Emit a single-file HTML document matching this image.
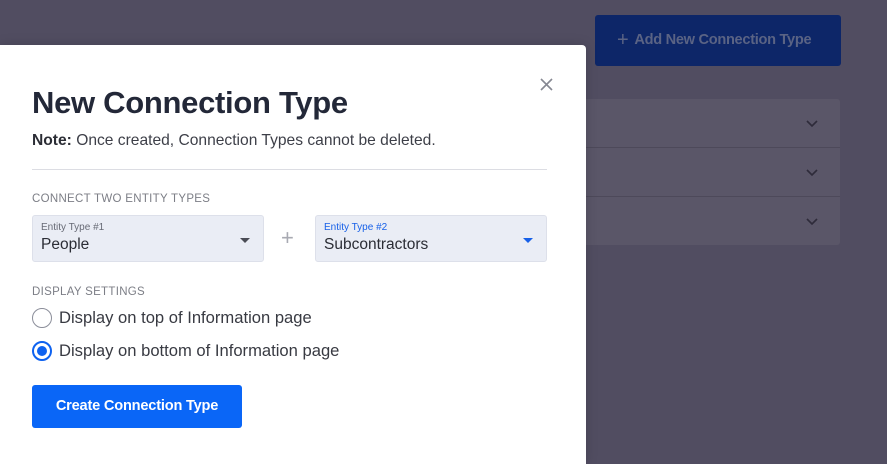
<!DOCTYPE html>
<html><head><meta charset="utf-8"><style>
*{box-sizing:border-box;margin:0;padding:0}
html,body{width:887px;height:464px;overflow:hidden}
body{position:relative;background:#514d61;font-family:"Liberation Sans",sans-serif;}
.addbtn{position:absolute;left:595px;top:15px;width:246px;height:51px;background:#0d2668;border-radius:3px;color:#5a6384;font-weight:bold;font-size:14.6px;line-height:51px;padding-left:22px;letter-spacing:-0.3px}
.addbtn span{font-weight:normal;font-size:20px;vertical-align:-2px;margin-right:6px}
.rows{position:absolute;left:540px;top:99px;width:300px;height:146px;background:#5a5668;border-radius:3px}
.row{height:49px;border-bottom:1px solid #4d495a;position:relative}
.row:last-child{border-bottom:none}
.row svg{position:absolute;right:22px;top:21px}
.modal{position:absolute;left:0;top:45px;width:586px;height:419px;background:#fff;border-radius:0 4px 0 0;box-shadow:0 0 12px rgba(0,0,0,.15)}
.x{position:absolute;left:540px;top:33px}
h1{position:absolute;left:32px;top:40px;font-size:31px;font-weight:bold;color:#232838;letter-spacing:-0.3px}
.note{position:absolute;left:32px;top:87px;font-size:15.6px;color:#3d3f48}
.note b{color:#2b2d35}
.hr{position:absolute;left:32px;top:124px;width:515px;height:1px;background:#dcdde3}
.lbl{position:absolute;left:32px;font-size:11.5px;color:#7c7e86;letter-spacing:.3px}
.sel{position:absolute;top:170px;width:232px;height:47px;background:#eaedf5;border:1px solid #dde0ea;border-radius:3px}
.sel .s{position:absolute;left:8px;top:6px;font-size:10px;color:#676a75}
.sel .v{position:absolute;left:8px;top:20px;font-size:15.5px;color:#2b2d35}
.sel .a{position:absolute;right:13px;top:22px;width:0;height:0;border-left:5px solid transparent;border-right:5px solid transparent;border-top:5px solid #4a4c55}
.plus{position:absolute;left:281px;top:180px;font-size:22px;color:#a8aab2}
.rad{position:absolute;left:32px;width:20px;height:20px;border-radius:50%;border:1.5px solid #8b8e9a}
.rad.on{border:2px solid #0e62f0}
.rad.on::after{content:"";position:absolute;left:3px;top:3px;width:10px;height:10px;border-radius:50%;background:#0e62f0}
.rt{position:absolute;left:59px;font-size:16.6px;color:#383a42}
.btn{position:absolute;left:32px;top:340px;width:210px;height:43px;background:#0a66f7;border-radius:3px;color:#fff;font-weight:bold;font-size:14.6px;text-align:center;line-height:43px;letter-spacing:-0.2px}
</style></head><body>
<div class="addbtn"><span>+</span>Add New Connection Type</div>
<div class="rows">
<div class="row"><svg width="12" height="8" viewBox="0 0 12 8"><path d="M1 1l5 5 5-5" fill="none" stroke="#2e2b3a" stroke-width="1.6"/></svg></div>
<div class="row"><svg width="12" height="8" viewBox="0 0 12 8"><path d="M1 1l5 5 5-5" fill="none" stroke="#2e2b3a" stroke-width="1.6"/></svg></div>
<div class="row"><svg width="12" height="8" viewBox="0 0 12 8"><path d="M1 1l5 5 5-5" fill="none" stroke="#2e2b3a" stroke-width="1.6"/></svg></div>
</div>
<div class="modal">
<svg class="x" width="13" height="13" viewBox="0 0 13 13"><path d="M1 1l11 11M12 1L1 12" stroke="#868892" stroke-width="1.6"/></svg>
<h1>New Connection Type</h1>
<div class="note"><b>Note:</b> Once created, Connection Types cannot be deleted.</div>
<div class="hr"></div>
<div class="lbl" style="top:148px">CONNECT TWO ENTITY TYPES</div>
<div class="sel" style="left:32px"><div class="s">Entity Type #1</div><div class="v">People</div><div class="a"></div></div>
<div class="plus">+</div>
<div class="sel" style="left:315px"><div class="s" style="color:#1760e8">Entity Type #2</div><div class="v">Subcontractors</div><div class="a" style="border-top-color:#1760e8"></div></div>
<div class="lbl" style="top:241px">DISPLAY SETTINGS</div>
<div class="rad" style="top:263px"></div><div class="rt" style="top:263px">Display on top of Information page</div>
<div class="rad on" style="top:296px"></div><div class="rt" style="top:296px">Display on bottom of Information page</div>
<div class="btn">Create Connection Type</div>
</div>
</body></html>
